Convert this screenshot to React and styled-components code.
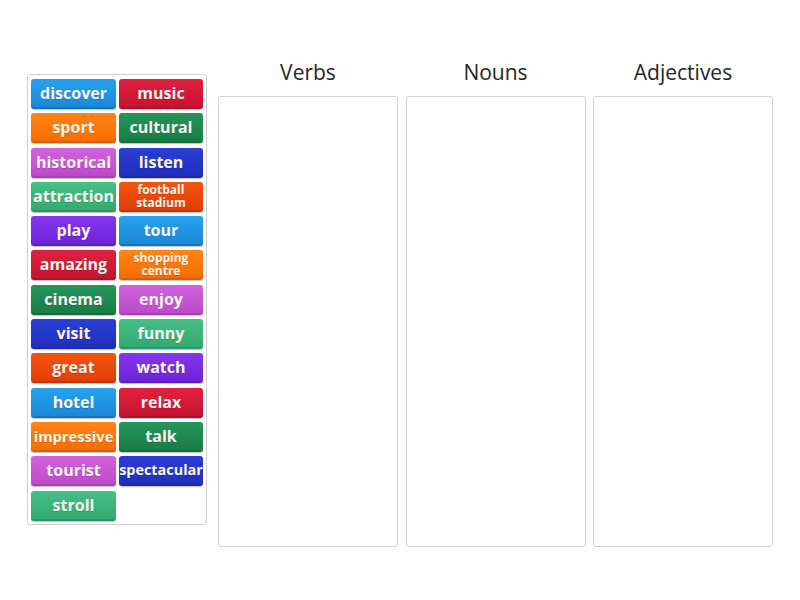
import React from 'react';
import styled, { createGlobalStyle } from 'styled-components';

const GlobalStyle = createGlobalStyle`
  body {
    margin: 0;
    background: #fff;
    font-family: "Open Sans", "Liberation Sans", sans-serif;
  }
`;

const palette = {
  blue: ['#26a2ee', '#1a86d6'],
  red: ['#e0213f', '#c4132f'],
  orange: ['#ff8416', '#f56c00'],
  green: ['#24955a', '#1a7b45'],
  pink: ['#d262de', '#bb48c9'],
  navy: ['#2a3ed6', '#1f2fbb'],
  teal: ['#45c088', '#33a870'],
  flame: ['#f5540f', '#e03d05'],
  purple: ['#8437ee', '#6e22d8'],
};

const order = ['blue', 'red', 'orange', 'green', 'pink', 'navy', 'teal', 'flame', 'purple'];

const words = [
  'discover', 'music', 'sport', 'cultural', 'historical', 'listen',
  'attraction', 'football stadium', 'play', 'tour', 'amazing', 'shopping centre',
  'cinema', 'enjoy', 'visit', 'funny', 'great', 'watch', 'hotel', 'relax',
  'impressive', 'talk', 'tourist', 'spectacular', 'stroll',
];

// wide words get a smaller size so they stay inside the tile
const shrink = { impressive: 14.7, spectacular: 14.4 };

const sizeFor = (w) => {
  if (w.includes(' ')) return 12;
  return shrink[w] || 16;
};

const Page = styled.div`
  display: flex;
  align-items: flex-start;
  padding: 56px 0 0 27px;
`;

const Bank = styled.div`
  margin-top: 18px;
  border: 1px solid #cfcfcf;
  border-radius: 3px;
  padding: 4px 3px 3px 3px;
  display: grid;
  grid-template-columns: 85px 84px;
  grid-auto-rows: 30px;
  column-gap: 3px;
  row-gap: 4.3px;
`;

const Tile = styled.div`
  display: flex;
  align-items: center;
  justify-content: center;
  text-align: center;
  padding-bottom: 2px;
  border-radius: 3px;
  color: #fdf6f2;
  font-weight: 700;
  font-size: ${(p) => p.$size}px;
  line-height: ${(p) => (p.$size < 13 ? '13px' : '18px')};
  white-space: ${(p) => (p.$size < 13 ? 'normal' : 'nowrap')};
  background: linear-gradient(${(p) => p.$top}, ${(p) => p.$bottom});
  box-shadow: inset 0 -2px 0 rgba(0, 0, 0, 0.12), 0 1px 1px rgba(0, 0, 0, 0.25);
  text-shadow: 0 1px 0 rgba(0, 0, 0, 0.15);
`;

const Columns = styled.div`
  display: flex;
  gap: 7.5px;
  margin-left: 11px;
`;

const Column = styled.div`
  display: flex;
  flex-direction: column;
  width: 180px;
`;

const Heading = styled.div`
  height: 32px;
  line-height: 32px;
  text-align: center;
  font-size: 21px;
  color: #262626;
`;

const Drop = styled.div`
  margin-top: 8px;
  height: 449px;
  border: 1px solid #cfcfcf;
  border-radius: 3px;
`;

export default function App() {
  return (
    <>
      <GlobalStyle />
      <Page>
        <Bank>
          {words.map((w, i) => {
            const [top, bottom] = palette[order[i % order.length]];
            return (
              <Tile key={w} $top={top} $bottom={bottom} $size={sizeFor(w)}>
                {w}
              </Tile>
            );
          })}
        </Bank>
        <Columns>
          {['Verbs', 'Nouns', 'Adjectives'].map((h) => (
            <Column key={h}>
              <Heading>{h}</Heading>
              <Drop />
            </Column>
          ))}
        </Columns>
      </Page>
    </>
  );
}
